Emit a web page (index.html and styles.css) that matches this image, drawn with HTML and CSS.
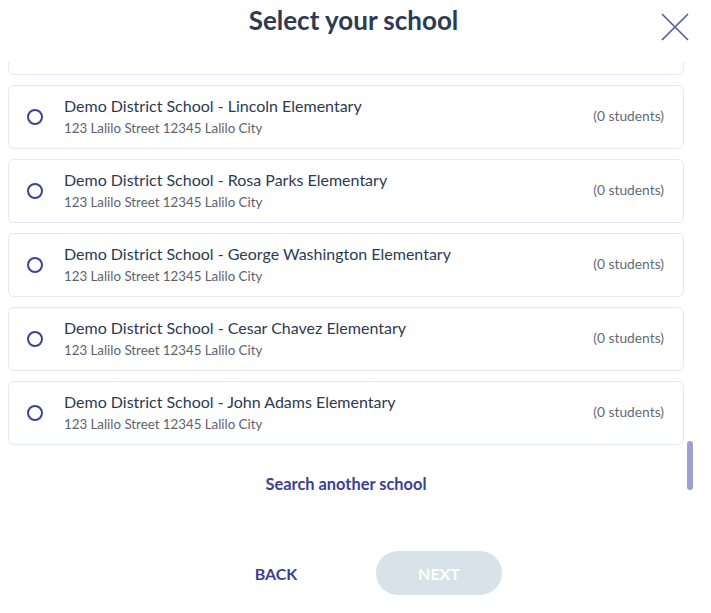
FILE: index.html
```html
<!DOCTYPE html>
<html lang="en">
<head>
    <meta charset="UTF-8">
    <meta name="viewport" content="width=device-width, initial-scale=1.0">
    <title>Select your school</title>
    <link rel="stylesheet" href="styles.css">
</head>
<body>
    <div class="modal">
        <div class="modal-header">
            <h1>Select your school</h1>
            <button class="close-btn" aria-label="Close">
                <svg width="28" height="28" viewBox="0 0 28 28">
                    <path d="M1 1 L27 27 M27 1 L1 27" stroke="#4f57a6" stroke-width="1.6" fill="none"/>
                </svg>
            </button>
        </div>

        <div class="scroll-area">
            <div class="list-column">
                <div class="school-list">
                    <label class="school-card">
                        <span class="radio"></span>
                        <span class="school-info">
                            <span class="school-name">Demo District School - Washington Elementary</span>
                            <span class="school-address">123 Lalilo Street 12345 Lalilo City</span>
                        </span>
                        <span class="school-count">(0 students)</span>
                    </label>
                    <label class="school-card">
                        <span class="radio"></span>
                        <span class="school-info">
                            <span class="school-name">Demo District School - Lincoln Elementary</span>
                            <span class="school-address">123 Lalilo Street 12345 Lalilo City</span>
                        </span>
                        <span class="school-count">(0 students)</span>
                    </label>
                    <label class="school-card">
                        <span class="radio"></span>
                        <span class="school-info">
                            <span class="school-name">Demo District School - Rosa Parks Elementary</span>
                            <span class="school-address">123 Lalilo Street 12345 Lalilo City</span>
                        </span>
                        <span class="school-count">(0 students)</span>
                    </label>
                    <label class="school-card">
                        <span class="radio"></span>
                        <span class="school-info">
                            <span class="school-name">Demo District School - George Washington Elementary</span>
                            <span class="school-address">123 Lalilo Street 12345 Lalilo City</span>
                        </span>
                        <span class="school-count">(0 students)</span>
                    </label>
                    <label class="school-card">
                        <span class="radio"></span>
                        <span class="school-info">
                            <span class="school-name">Demo District School - Cesar Chavez Elementary</span>
                            <span class="school-address">123 Lalilo Street 12345 Lalilo City</span>
                        </span>
                        <span class="school-count">(0 students)</span>
                    </label>
                    <label class="school-card">
                        <span class="radio"></span>
                        <span class="school-info">
                            <span class="school-name">Demo District School - John Adams Elementary</span>
                            <span class="school-address">123 Lalilo Street 12345 Lalilo City</span>
                        </span>
                        <span class="school-count">(0 students)</span>
                    </label>
                </div>
                <a class="search-link" href="#">Search another school</a>
            </div>
            <div class="scroll-track">
                <div class="scroll-thumb"></div>
            </div>
        </div>

        <div class="modal-footer">
            <button class="btn btn-back">BACK</button>
            <button class="btn btn-next" disabled>NEXT</button>
        </div>
    </div>
</body>
</html>
```

FILE: styles.css
```css
body {
    margin: 0;
    font-family: 'Lato', 'Liberation Sans', sans-serif;
    background: #ffffff;
    color: #2e3a50;
}

.modal {
    width: 711px;
    height: 613px;
    display: flex;
    flex-direction: column;
    overflow: hidden;
}

.modal-header {
    position: relative;
    height: 62px;
}

.modal-header h1 {
    margin: 0;
    padding-right: 4px;
    font-size: 26px;
    line-height: 40px;
    font-weight: 700;
    text-align: center;
    color: #2e3a50;
}

.close-btn {
    position: absolute;
    top: 13px;
    left: 661px;
    width: 28px;
    height: 28px;
    padding: 0;
    border: none;
    background: transparent;
    cursor: pointer;
}

.close-btn svg {
    display: block;
}

.scroll-area {
    display: flex;
    height: 458px;
}

.list-column {
    width: 676px;
    margin-left: 8px;
    display: flex;
    flex-direction: column;
    overflow: hidden;
}

.school-list {
    display: flex;
    flex-direction: column;
    gap: 10px;
    margin-top: -51px;
}

.school-card {
    display: flex;
    align-items: center;
    height: 64px;
    box-sizing: border-box;
    padding: 0 19px 0 18px;
    border: 1px solid #e2e8f4;
    border-radius: 6px;
    background: #ffffff;
    cursor: pointer;
}

.radio {
    width: 16px;
    height: 16px;
    box-sizing: border-box;
    border: 2px solid #3b4393;
    border-radius: 50%;
    flex-shrink: 0;
    margin-right: 21px;
}

.school-info {
    display: flex;
    flex-direction: column;
    flex: 1;
    margin-top: -2px;
}

.school-name {
    font-size: 16px;
    line-height: 20px;
    color: #2e3a50;
}

.school-address {
    font-size: 13.3px;
    line-height: 18px;
    margin-top: 3px;
    color: #5b626e;
}

.school-count {
    font-size: 13.8px;
    margin-top: -3px;
    color: #636a76;
}

.search-link {
    margin-top: 29px;
    align-self: center;
    font-size: 16.4px;
    line-height: 20px;
    font-weight: 700;
    color: #3a4190;
    text-decoration: none;
}

.scroll-track {
    width: 6px;
    margin-left: 3px;
}

.scroll-thumb {
    margin-top: 379px;
    height: 49px;
    border-radius: 3px;
    background: #9da1cf;
}

.modal-footer {
    display: flex;
    justify-content: center;
    gap: 37px;
    padding-top: 31px;
    padding-left: 4px;
}

.btn {
    width: 126px;
    height: 44px;
    border: none;
    border-radius: 22px;
    font-family: inherit;
    font-size: 16px;
    font-weight: 700;
    cursor: pointer;
}

.btn-back {
    background: transparent;
    color: #3a4190;
}

.btn-next {
    background: #d8e2e9;
    color: #ffffff;
    cursor: default;
}
```
